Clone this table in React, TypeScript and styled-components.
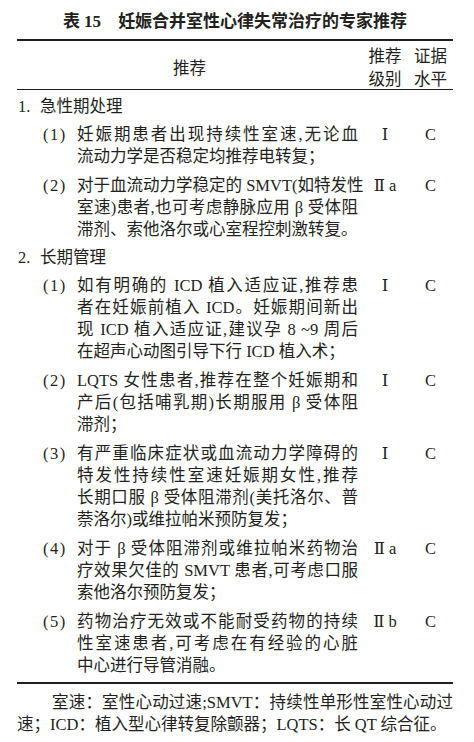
import React from 'react'
import styled, { createGlobalStyle } from 'styled-components'

const GlobalStyle = createGlobalStyle`
  html, body {
    margin: 0;
    padding: 0;
    background: #ffffff;
  }
  body {
    font-family: 'Liberation Serif', 'Noto Sans CJK SC', serif;
    color: #231f20;
  }
`

type Item = {
  label: string
  lines: string[]
  level: string
  evidence: string
}

type Section = {
  num: string
  title: string
  items: Item[]
}

const sections: Section[] = [
  {
    num: '1.',
    title: '急性期处理',
    items: [
      {
        label: '(1)',
        lines: ['妊娠期患者出现持续性室速,无论血', '流动力学是否稳定均推荐电转复；'],
        level: 'Ⅰ',
        evidence: 'C',
      },
      {
        label: '(2)',
        lines: [
          '对于血流动力学稳定的 SMVT(如特发性',
          '室速)患者,也可考虑静脉应用 β 受体阻',
          '滞剂、索他洛尔或心室程控刺激转复。',
        ],
        level: 'Ⅱ a',
        evidence: 'C',
      },
    ],
  },
  {
    num: '2.',
    title: '长期管理',
    items: [
      {
        label: '(1)',
        lines: [
          '如有明确的 ICD 植入适应证,推荐患',
          '者在妊娠前植入 ICD。妊娠期间新出',
          '现 ICD 植入适应证,建议孕 8 ~9 周后',
          '在超声心动图引导下行 ICD 植入术；',
        ],
        level: 'Ⅰ',
        evidence: 'C',
      },
      {
        label: '(2)',
        lines: ['LQTS 女性患者,推荐在整个妊娠期和', '产后(包括哺乳期)长期服用 β 受体阻', '滞剂；'],
        level: 'Ⅰ',
        evidence: 'C',
      },
      {
        label: '(3)',
        lines: [
          '有严重临床症状或血流动力学障碍的',
          '特发性持续性室速妊娠期女性,推荐',
          '长期口服 β 受体阻滞剂(美托洛尔、普',
          '萘洛尔)或维拉帕米预防复发；',
        ],
        level: 'Ⅰ',
        evidence: 'C',
      },
      {
        label: '(4)',
        lines: ['对于 β 受体阻滞剂或维拉帕米药物治', '疗效果欠佳的 SMVT 患者,可考虑口服', '索他洛尔预防复发；'],
        level: 'Ⅱ a',
        evidence: 'C',
      },
      {
        label: '(5)',
        lines: ['药物治疗无效或不能耐受药物的持续', '性室速患者,可考虑在有经验的心脏', '中心进行导管消融。'],
        level: 'Ⅱ b',
        evidence: 'C',
      },
    ],
  },
]

export default function App() {
  return (
    <Page>
      <GlobalStyle />
      <Caption>
        <CaptionNo>表 15</CaptionNo>
        <span>妊娠合并室性心律失常治疗的专家推荐</span>
      </Caption>
      <Table>
        <HeaderRow>
          <HeadCell>推荐</HeadCell>
          <HeadCell>
            推荐
            <br />
            级别
          </HeadCell>
          <HeadCell>
            证据
            <br />
            水平
          </HeadCell>
        </HeaderRow>
        <Body>
          {sections.map((section, si) => (
            <React.Fragment key={section.num}>
              <SectionTitle $first={si === 0}>
                <SectionNum>{section.num}</SectionNum>
                <span>{section.title}</span>
              </SectionTitle>
              {section.items.map((item, ii) => (
                <ItemRow key={`${section.num}-${item.label}`} $afterTitle={ii === 0}>
                  <ItemText>
                    <ItemLabel>{item.label}</ItemLabel>
                    <Lines>
                      {item.lines.map((line, li) => (
                        <Line key={li} $last={li === item.lines.length - 1}>
                          {line}
                        </Line>
                      ))}
                    </Lines>
                  </ItemText>
                  <Grade>{item.level}</Grade>
                  <Grade>{item.evidence}</Grade>
                </ItemRow>
              ))}
            </React.Fragment>
          ))}
        </Body>
      </Table>
      <Footnote>
        <FootLine $first>室速：室性心动过速;SMVT：持续性单形性室性心动过</FootLine>
        <FootLine>速；ICD：植入型心律转复除颤器；LQTS：长 QT 综合征。</FootLine>
      </Footnote>
    </Page>
  )
}

const Page = styled.div`
  width: 436px;
  padding: 11px 21px 0 17px;
  font-size: 16.5px;
`

const Caption = styled.div`
  text-align: center;
  font-family: 'Liberation Serif', 'Noto Sans CJK SC', sans-serif;
  font-weight: 700;
  font-size: 17px;
  line-height: 22px;
  margin-bottom: 6px;
`

const CaptionNo = styled.span`
  margin-right: 17px;
`

const Table = styled.div`
  border-top: 2px solid #231f20;
  border-bottom: 2px solid #231f20;
`

const columns = '345px 46px 45px'

const HeaderRow = styled.div`
  display: grid;
  grid-template-columns: ${columns};
  align-items: center;
  height: 49px;
  padding-top: 4px;
  box-sizing: border-box;
  border-bottom: 1px solid #231f20;
`

const HeadCell = styled.div`
  text-align: center;
  line-height: 23px;
`

const Body = styled.div`
  padding: 6px 0 5px;
`

const SectionTitle = styled.div<{ $first?: boolean }>`
  display: flex;
  line-height: 22px;
  margin-top: ${(p) => (p.$first ? '0' : '6px')};
`

const SectionNum = styled.span`
  width: 23px;
  padding-left: 1px;
  box-sizing: border-box;
`

const ItemRow = styled.div<{ $afterTitle?: boolean }>`
  display: grid;
  grid-template-columns: ${columns};
  align-items: start;
  margin-top: ${(p) => (p.$afterTitle ? '6px' : '7px')};
`

const ItemText = styled.div`
  display: flex;
`

const ItemLabel = styled.span`
  width: 60px;
  padding-left: 26px;
  box-sizing: border-box;
  line-height: 22px;
  letter-spacing: 1.5px;
`

const Lines = styled.div`
  width: 281px;
`

const Line = styled.div<{ $last?: boolean }>`
  line-height: 22px;
  white-space: nowrap;
  text-align: justify;
  text-align-last: ${(p) => (p.$last ? 'left' : 'justify')};
`

const Grade = styled.div`
  text-align: center;
  line-height: 22px;
  font-family: 'Liberation Serif', 'DejaVu Serif', serif;
`

const Footnote = styled.div`
  padding-top: 8px;
`

const FootLine = styled.div<{ $first?: boolean }>`
  line-height: 22px;
  white-space: nowrap;
  text-indent: ${(p) => (p.$first ? '35px' : '0')};
  text-align: justify;
  text-align-last: ${(p) => (p.$first ? 'justify' : 'left')};
`
